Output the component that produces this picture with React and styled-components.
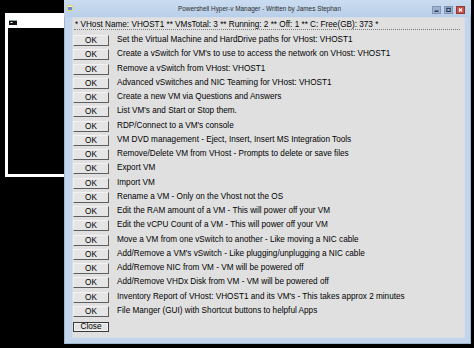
import React from "react";
import styled, { createGlobalStyle } from "styled-components";

const GlobalStyle = createGlobalStyle`
  html, body {
    margin: 0;
    padding: 0;
    background: #000;
  }
  body {
    width: 474px;
    height: 348px;
    overflow: hidden;
    font-family: "Liberation Sans", Arial, sans-serif;
  }
`;

const menuItems = [
  "Set the Virtual Machine and HardDrive paths for VHost: VHOST1",
  "Create a vSwitch for VM's to use to access the network on VHost: VHOST1",
  "Remove a vSwitch from VHost: VHOST1",
  "Advanced vSwitches and NIC Teaming for VHost: VHOST1",
  "Create a new VM via Questions and Answers",
  "List VM's and Start or Stop them.",
  "RDP/Connect to a VM's console",
  "VM DVD management - Eject, Insert, Insert MS Integration Tools",
  "Remove/Delete VM from VHost - Prompts to delete or save files",
  "Export VM",
  "Import VM",
  "Rename a VM - Only on the Vhost not the OS",
  "Edit the RAM amount of a VM - This will power off your VM",
  "Edit the vCPU Count of a VM - This will power off your VM",
  "Move a VM from one vSwitch to another - Like moving a NIC cable",
  "Add/Remove a VM's vSwitch - Like plugging/unplugging a NIC cable",
  "Add/Remove NIC from VM - VM will be powered off",
  "Add/Remove VHDx Disk from VM - VM will be powered off",
  "Inventory Report of VHost: VHOST1 and its VM's - This takes approx 2 minutes",
  "File Manger (GUI) with Shortcut buttons to helpful Apps",
];

const App = () => {
  return (
    <>
      <GlobalStyle />
      <Desktop>
        <ConsoleWindow>
          <ConsoleTitle>
            <svg width="8" height="5" viewBox="0 0 8 5">
              <rect x="0" y="0" width="8" height="5" fill="#111" />
              <rect x="0" y="0" width="8" height="1" fill="#8aa" />
              <rect x="1.5" y="2" width="2" height="1" fill="#fff" />
            </svg>
          </ConsoleTitle>
          <ConsoleBody />
        </ConsoleWindow>

        <MainWindow>
          <TitleBar>
            <AppIcon>
              <svg width="6" height="6" viewBox="0 0 6 6">
                <rect x="0" y="0" width="6" height="6" rx="1" fill="#e9d27a" />
                <rect x="1" y="2" width="4" height="3" fill="#5d8fcf" />
                <rect x="1" y="1" width="4" height="1" fill="#fff6c8" />
              </svg>
            </AppIcon>
            <TitleText>Powershell Hyper-v Manager - Written by James Stephan</TitleText>
            <CaptionButtons>
              <CaptionButton>
                <svg width="7" height="6" viewBox="0 0 7 6">
                  <rect x="1.5" y="3.5" width="4" height="1.3" fill="#1b2a44" />
                </svg>
              </CaptionButton>
              <CaptionButton>
                <svg width="7" height="6" viewBox="0 0 7 6">
                  <rect x="1.8" y="1.3" width="3.4" height="3.2" fill="none" stroke="#1b2a44" strokeWidth="1" />
                </svg>
              </CaptionButton>
              <CaptionButton close>
                <svg width="7" height="6" viewBox="0 0 7 6">
                  <path d="M2 1.3 L5 4.5 M5 1.3 L2 4.5" stroke="#fff" strokeWidth="1.1" />
                </svg>
              </CaptionButton>
            </CaptionButtons>
          </TitleBar>

          <Client>
            <StatusLine>
              * VHost Name: VHOST1 ** VMsTotal: 3 ** Running: 2 ** Off: 1 ** C: Free(GB): 373 *
            </StatusLine>
            <MenuList>
              {menuItems.map((label, i) => (
                <MenuRow key={i}>
                  <OkButton>OK</OkButton>
                  <MenuLabel>{label}</MenuLabel>
                </MenuRow>
              ))}
            </MenuList>
            <CloseButton>Close</CloseButton>
          </Client>
        </MainWindow>
      </Desktop>
    </>
  );
};

export default App;

const Desktop = styled.div`
  position: relative;
  width: 474px;
  height: 348px;
  background: #000;
  overflow: hidden;
`;

const ConsoleWindow = styled.div`
  position: absolute;
  left: 5px;
  top: 13px;
  width: 80px;
  height: 164px;
  background: #fff;
  display: flex;
  flex-direction: column;
  padding: 0 0 3px 3px;
  box-sizing: border-box;
`;

const ConsoleTitle = styled.div`
  height: 15px;
  display: flex;
  align-items: center;
  padding-left: 1px;
  padding-top: 4px;
  box-sizing: border-box;
`;

const ConsoleBody = styled.div`
  flex: 1;
  background: #000;
`;

const MainWindow = styled.div`
  position: absolute;
  left: 64px;
  top: 0;
  width: 407px;
  height: 344px;
  display: flex;
  flex-direction: column;
  background: #c3d5ea;
  box-shadow: inset 0 0 0 1px #9fb6d2;
  box-sizing: border-box;
`;

const TitleBar = styled.div`
  height: 17px;
  display: flex;
  align-items: center;
  padding: 0 6px 0 3px;
  background: linear-gradient(#cadcf0, #b9cfe9);
  box-sizing: border-box;
`;

const AppIcon = styled.div`
  width: 6px;
  height: 6px;
  display: flex;
  margin-top: -1px;
`;

const TitleText = styled.div`
  flex: 1;
  text-align: center;
  font-size: 6.4px;
  color: #2c2c2c;
  padding-left: 14px;
  white-space: nowrap;
`;

const CaptionButtons = styled.div`
  display: flex;
  gap: 3px;
  margin-top: 2px;
`;

const CaptionButton = styled.div`
  width: 7px;
  height: 6px;
  display: flex;
  background: ${(p) => (p.close ? "#c8524a" : "#9db3cf")};
  border: 0.5px solid ${(p) => (p.close ? "#8e3a33" : "#7f95b3")};
`;

const Client = styled.div`
  flex: 1;
  margin: 0 6px 6px 8px;
  background: #e0e0e0;
  display: flex;
  flex-direction: column;
  padding: 1px 0 0 1px;
  box-shadow: inset 0 0 0 1px #d6dde6;
`;

const StatusLine = styled.div`
  height: 9px;
  padding-top: 2px;
  line-height: 9px;
  margin: 0 5px 0 1px;
  padding-left: 1px;
  font-size: 8.2px;
  color: #000;
  border-bottom: 1px dotted #7a7a7a;
  white-space: nowrap;
`;

const MenuList = styled.div`
  display: flex;
  flex-direction: column;
  margin-top: 5px;
`;

const MenuRow = styled.div`
  height: 14.25px;
  display: flex;
  align-items: flex-start;
`;

const OkButton = styled.div`
  width: 36px;
  height: 11px;
  box-sizing: border-box;
  background: #e5e5e5;
  border-top: 1px solid #f2f2f2;
  border-left: 1px solid #f2f2f2;
  border-right: 1px solid #5e5e5e;
  border-bottom: 1px solid #5e5e5e;
  font-size: 8.2px;
  line-height: 9px;
  text-align: center;
  color: #000;
`;

const MenuLabel = styled.div`
  padding-left: 8px;
  font-size: 8.2px;
  line-height: 10px;
  color: #000;
  white-space: nowrap;
`;

const CloseButton = styled.div`
  width: 36px;
  height: 10px;
  margin-top: 2px;
  box-sizing: border-box;
  border: 1px solid #3a3a3a;
  box-shadow: inset 0 0 0 1px #f2f2f2;
  background: #e4e4e4;
  font-size: 8.2px;
  line-height: 8px;
  text-align: center;
  color: #000;
`;
